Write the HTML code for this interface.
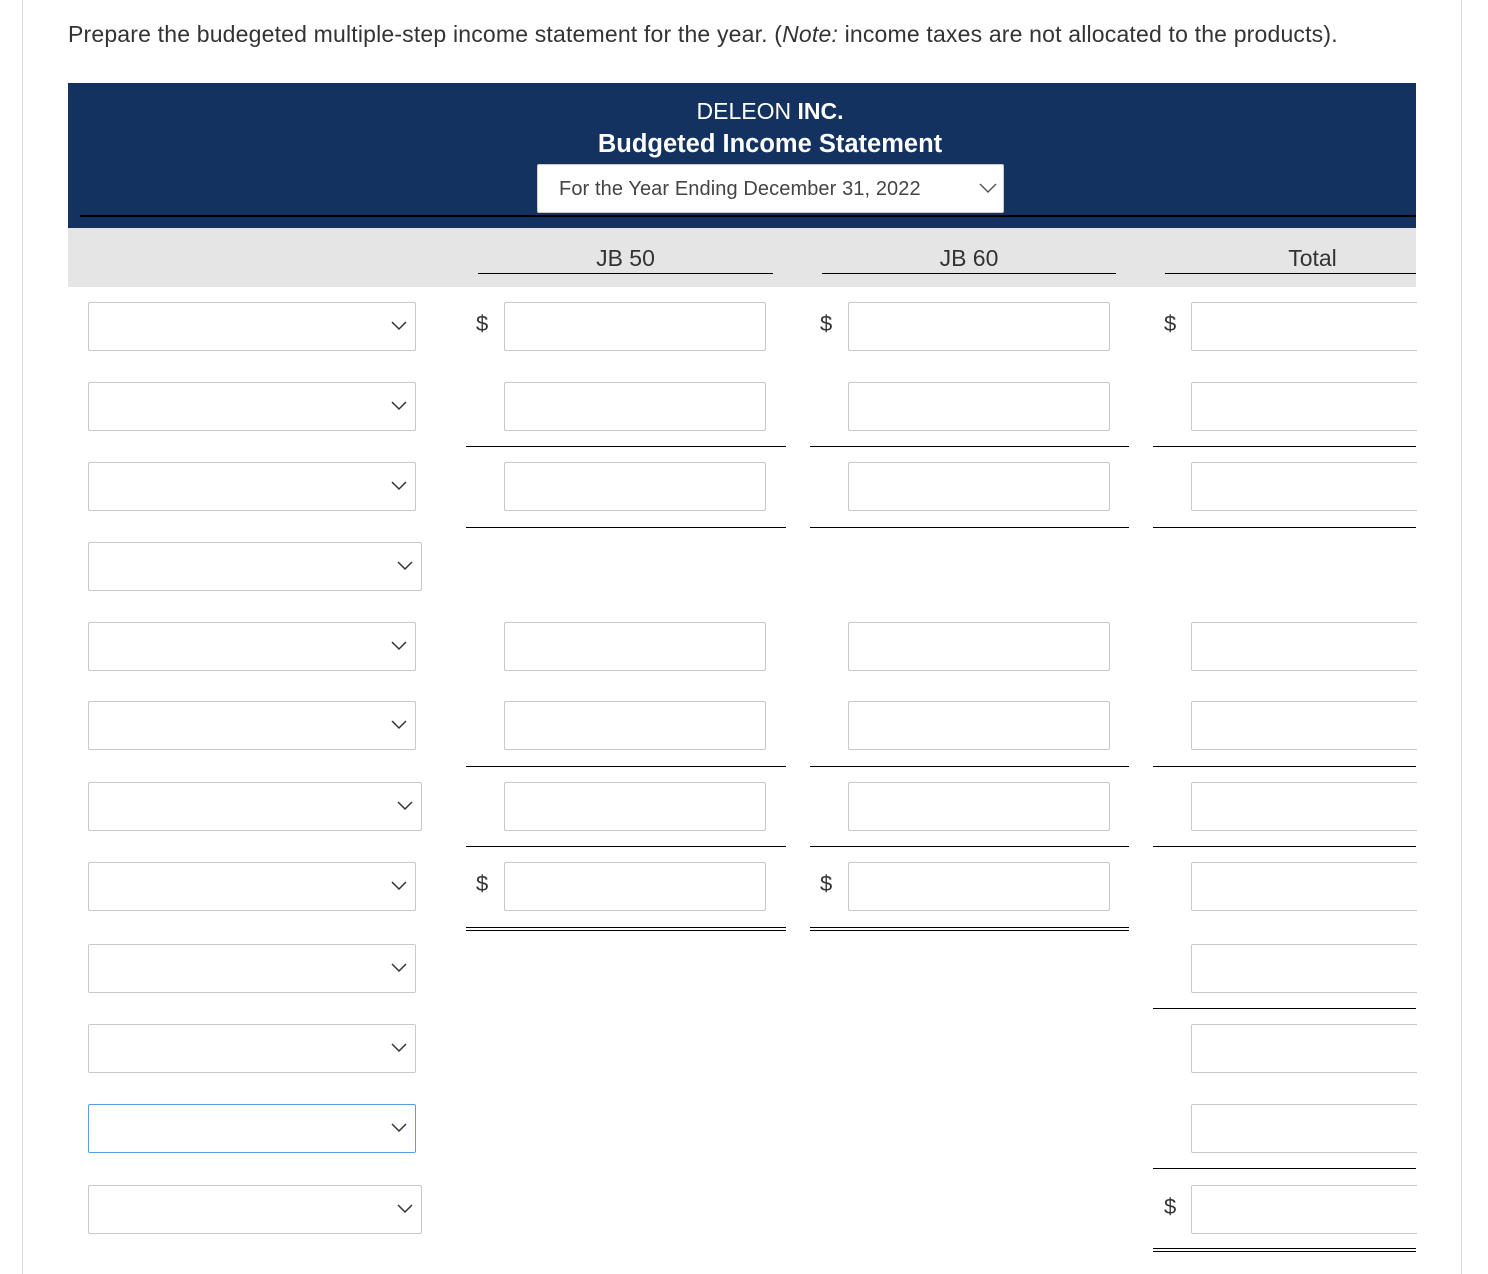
<!DOCTYPE html>
<html><head><style>
body{margin:0;width:1488px;height:1274px;position:relative;background:#fff;font-family:"Liberation Sans",sans-serif;overflow:hidden}
.a{position:absolute}
.dd{position:absolute;left:88px;width:326px;height:47px;border:1px solid #c8c8c8;border-radius:2px;background:#fff}
.dd svg{position:absolute;right:8px;top:18px}
.in{position:absolute;height:47px;border:1px solid #c8c8c8;border-radius:2px;background:#fff}
.c1{left:504px;width:260px}.c2{left:848px;width:260px}.c3{left:1191px;width:225px;border-right:none;border-radius:2px 0 0 2px}
.d{position:absolute;font-size:22px;color:#333}
.l{position:absolute;height:1px;background:#000}
.l1{left:466px;width:320px}.l2{left:810px;width:319px}.l3{left:1153px;width:263px}
</style></head><body>
<div class="a" style="left:22px;top:0;width:1px;height:1274px;background:#ddd"></div>
<div class="a" style="left:1461px;top:0;width:1px;height:1274px;background:#ddd"></div>
<div class="a" style="left:68px;top:21px;font-size:23px;letter-spacing:0.18px;color:#333;white-space:nowrap">Prepare the budegeted multiple-step income statement for the year. (<i>Note:</i> income taxes are not allocated to the products).</div>
<div class="a" style="left:68px;top:83px;width:1348px;height:145px;background:#14325f"></div>
<div class="a" style="left:68px;top:98px;width:1404px;text-align:center;color:#fff;font-size:23px">DELEON <b>INC.</b></div>
<div class="a" style="left:68px;top:130px;width:1404px;text-align:center;color:#fff;font-size:25.5px;font-weight:bold">Budgeted Income Statement</div>
<div class="a" style="left:537px;top:164px;width:465px;height:47px;background:#fff;border:1px solid #ccc;border-radius:2px"><span class="a" style="left:21px;top:13px;font-size:20px;color:#444;letter-spacing:0.1px">For the Year Ending December 31, 2022</span><svg class="a" style="right:6px;top:17px" width="18" height="12"><path d="M1 2 L9 10 L17 2" fill="none" stroke="#555" stroke-width="1.5"/></svg></div>
<div class="a" style="left:80px;top:215px;width:1336px;height:2px;background:#000"></div>
<div class="a" style="left:68px;top:228px;width:1348px;height:59px;background:#e5e5e5"></div>
<div class="a" style="left:478px;top:245px;width:295px;text-align:center;font-size:23px;color:#333">JB 50</div>
<div class="a" style="left:822px;top:245px;width:294px;text-align:center;font-size:23px;color:#333">JB 60</div>
<div class="a" style="left:1165px;top:245px;width:295px;text-align:center;font-size:23px;color:#333">Total</div>
<div class="l" style="left:478px;width:295px;top:273px"></div>
<div class="l" style="left:822px;width:294px;top:273px"></div>
<div class="l" style="left:1165px;width:251px;top:273px"></div>

<div class="dd" style="top:302px"><svg width="16" height="10"><path d="M1 1 L8 8 L15 1" fill="none" stroke="#333" stroke-width="1.5"/></svg></div>
<div class="dd" style="top:382px"><svg width="16" height="10"><path d="M1 1 L8 8 L15 1" fill="none" stroke="#333" stroke-width="1.5"/></svg></div>
<div class="dd" style="top:462px"><svg width="16" height="10"><path d="M1 1 L8 8 L15 1" fill="none" stroke="#333" stroke-width="1.5"/></svg></div>
<div class="dd" style="top:542px;width:332px"><svg width="16" height="10"><path d="M1 1 L8 8 L15 1" fill="none" stroke="#333" stroke-width="1.5"/></svg></div>
<div class="dd" style="top:622px"><svg width="16" height="10"><path d="M1 1 L8 8 L15 1" fill="none" stroke="#333" stroke-width="1.5"/></svg></div>
<div class="dd" style="top:701px"><svg width="16" height="10"><path d="M1 1 L8 8 L15 1" fill="none" stroke="#333" stroke-width="1.5"/></svg></div>
<div class="dd" style="top:782px;width:332px"><svg width="16" height="10"><path d="M1 1 L8 8 L15 1" fill="none" stroke="#333" stroke-width="1.5"/></svg></div>
<div class="dd" style="top:862px"><svg width="16" height="10"><path d="M1 1 L8 8 L15 1" fill="none" stroke="#333" stroke-width="1.5"/></svg></div>
<div class="dd" style="top:944px"><svg width="16" height="10"><path d="M1 1 L8 8 L15 1" fill="none" stroke="#333" stroke-width="1.5"/></svg></div>
<div class="dd" style="top:1024px"><svg width="16" height="10"><path d="M1 1 L8 8 L15 1" fill="none" stroke="#333" stroke-width="1.5"/></svg></div>
<div class="dd" style="top:1104px;border-color:#5b9be6"><svg width="16" height="10"><path d="M1 1 L8 8 L15 1" fill="none" stroke="#333" stroke-width="1.5"/></svg></div>
<div class="dd" style="top:1185px;width:332px"><svg width="16" height="10"><path d="M1 1 L8 8 L15 1" fill="none" stroke="#333" stroke-width="1.5"/></svg></div>

<div class="in c1" style="top:302px"></div><div class="in c2" style="top:302px"></div><div class="in c3" style="top:302px"></div>
<div class="in c1" style="top:382px"></div><div class="in c2" style="top:382px"></div><div class="in c3" style="top:382px"></div>
<div class="in c1" style="top:462px"></div><div class="in c2" style="top:462px"></div><div class="in c3" style="top:462px"></div>
<div class="in c1" style="top:622px"></div><div class="in c2" style="top:622px"></div><div class="in c3" style="top:622px"></div>
<div class="in c1" style="top:701px"></div><div class="in c2" style="top:701px"></div><div class="in c3" style="top:701px"></div>
<div class="in c1" style="top:782px"></div><div class="in c2" style="top:782px"></div><div class="in c3" style="top:782px"></div>
<div class="in c1" style="top:862px"></div><div class="in c2" style="top:862px"></div><div class="in c3" style="top:862px"></div>
<div class="in c3" style="top:944px"></div>
<div class="in c3" style="top:1024px"></div>
<div class="in c3" style="top:1104px"></div>
<div class="in c3" style="top:1185px"></div>

<div class="d" style="left:476px;top:311px">$</div><div class="d" style="left:820px;top:311px">$</div><div class="d" style="left:1164px;top:311px">$</div>
<div class="d" style="left:476px;top:871px">$</div><div class="d" style="left:820px;top:871px">$</div>
<div class="d" style="left:1164px;top:1194px">$</div>

<div class="l l1" style="top:446px"></div><div class="l l2" style="top:446px"></div><div class="l l3" style="top:446px"></div>
<div class="l l1" style="top:527px"></div><div class="l l2" style="top:527px"></div><div class="l l3" style="top:527px"></div>
<div class="l l1" style="top:766px"></div><div class="l l2" style="top:766px"></div><div class="l l3" style="top:766px"></div>
<div class="l l1" style="top:846px"></div><div class="l l2" style="top:846px"></div><div class="l l3" style="top:846px"></div>
<div class="l l1" style="top:927px"></div><div class="l l2" style="top:927px"></div>
<div class="l l1" style="top:930px"></div><div class="l l2" style="top:930px"></div>
<div class="l l3" style="top:1008px"></div>
<div class="l l3" style="top:1168px"></div>
<div class="l l3" style="top:1248px"></div>
<div class="l l3" style="top:1251px"></div>
</body></html>
